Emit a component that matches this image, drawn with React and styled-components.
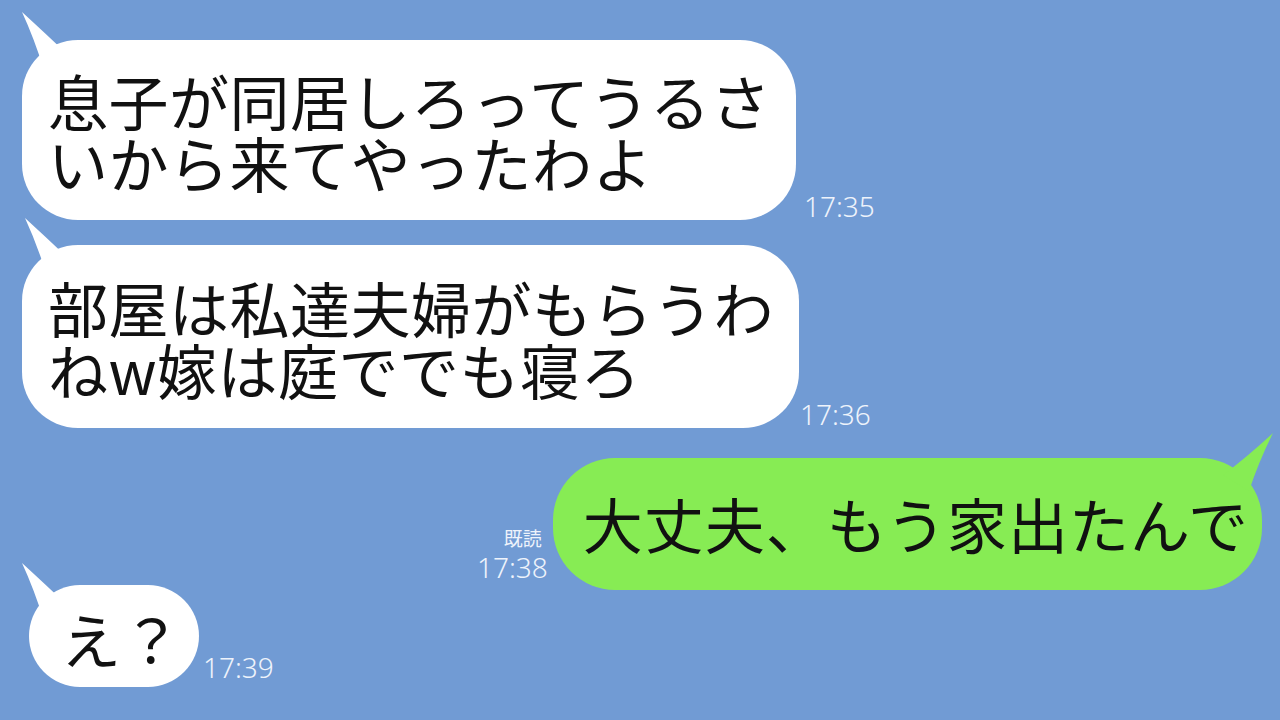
import React from 'react';
import styled, {createGlobalStyle} from 'styled-components';

const Global = createGlobalStyle`
  html, body {
    margin: 0;
    padding: 0;
    background: #719bd4;
  }
  body {
    font-family: "Noto Sans CJK JP", "Noto Sans", sans-serif;
  }
`

const Screen = styled.div`
  width: 1280px;
  height: 720px;
  overflow: hidden;
  background: #719bd4;
  display: flex;
  flex-direction: column;
  padding: 40px 18px 0 22px;
  box-sizing: border-box;
`

const Row = styled.div`
  display: flex;
  align-items: flex-end;
  justify-content: ${p => (p.$mine ? 'flex-end' : 'flex-start')};
  gap: ${p => p.$gap || 7}px;
  margin-top: ${p => p.$top || 0}px;
  padding-left: ${p => p.$indent || 0}px;
`

const Bubble = styled.div`
  position: relative;
  background: ${p => (p.$mine ? '#87ec54' : '#ffffff')};
  color: #111;
  border-radius: ${p => p.$radius || 56}px;
  padding: ${p => p.$pad};
  font-family: "Noto Sans CJK JP", "Noto Sans", sans-serif;
  font-size: 60px;
  line-height: 62px;
  letter-spacing: ${p => p.$track || 0.5}px;
  white-space: nowrap;
`

const Tail = styled.svg`
  position: absolute;
  left: ${p => (p.$left !== undefined ? `${p.$left}px` : 'auto')};
  right: ${p => (p.$right !== undefined ? `${p.$right}px` : 'auto')};
  top: ${p => p.$top}px;
  width: 56px;
  height: 60px;
  overflow: visible;
`

const Meta = styled.div`
  display: flex;
  flex-direction: column;
  align-items: ${p => (p.$mine ? 'flex-end' : 'flex-start')};
  margin-bottom: ${p => p.$lift || 0}px;
  color: #eef3fb;
`

const Read = styled.span`
  font-family: "Noto Sans CJK JP", "Noto Sans", sans-serif;
  font-size: 19px;
  line-height: 24px;
  margin: 0 6px 4px 0;
`

const Time = styled.span`
  font-family: "Noto Sans", "DejaVu Sans", sans-serif;
  font-weight: 300;
  font-size: 28px;
  line-height: 27px;
`

function LeftTail({left, top}) {
  return (
    <Tail $left={left} $top={top} viewBox="0 0 56 60">
      <path d="M0 0 Q24 22 45 42 L22 58 Q12 26 0 0 Z" fill="#ffffff" />
    </Tail>
  );
}

function RightTail() {
  return (
    <Tail $right={-11} $top={-25} viewBox="0 0 56 60">
      <path d="M56 0 Q30 24 6 42 L32 58 Q42 28 56 0 Z" fill="#87ec54" />
    </Tail>
  );
}

function App() {
  return (
    <>
      <Global />
      <Screen>
        <Row $gap={8}>
          <Bubble $pad="29px 25px 27px 26px">
            <LeftTail left={0} top={-28} />
            息子が同居しろってうるさ<br />いから来てやったわよ
          </Bubble>
          <Meta $lift={0}>
            <Time>17:35</Time>
          </Meta>
        </Row>

        <Row $top={25} $gap={1}>
          <Bubble $pad="31px 25px 28px 26px">
            <LeftTail left={3} top={-27} />
            部屋は私達夫婦がもらうわ<br />ねw嫁は庭ででも寝ろ
          </Bubble>
          <Meta $lift={0}>
            <Time>17:36</Time>
          </Meta>
        </Row>

        <Row $mine $top={30} $gap={5}>
          <Meta $mine $lift={9}>
            <Read>既読</Read>
            <Time>17:38</Time>
          </Meta>
          <Bubble $mine $radius={62} $track={1} $pad="34px 13px 36px 30px">
            <RightTail />
            大丈夫、もう家出たんで
          </Bubble>
        </Row>

        <Row $top={-5} $indent={7} $gap={4}>
          <Bubble $radius={51} $pad="22px 17px 18px 32px">
            <LeftTail left={-7} top={-22} />
            え？
          </Bubble>
          <Meta $lift={6}>
            <Time>17:39</Time>
          </Meta>
        </Row>
      </Screen>
    </>
  );
}

export default App;
